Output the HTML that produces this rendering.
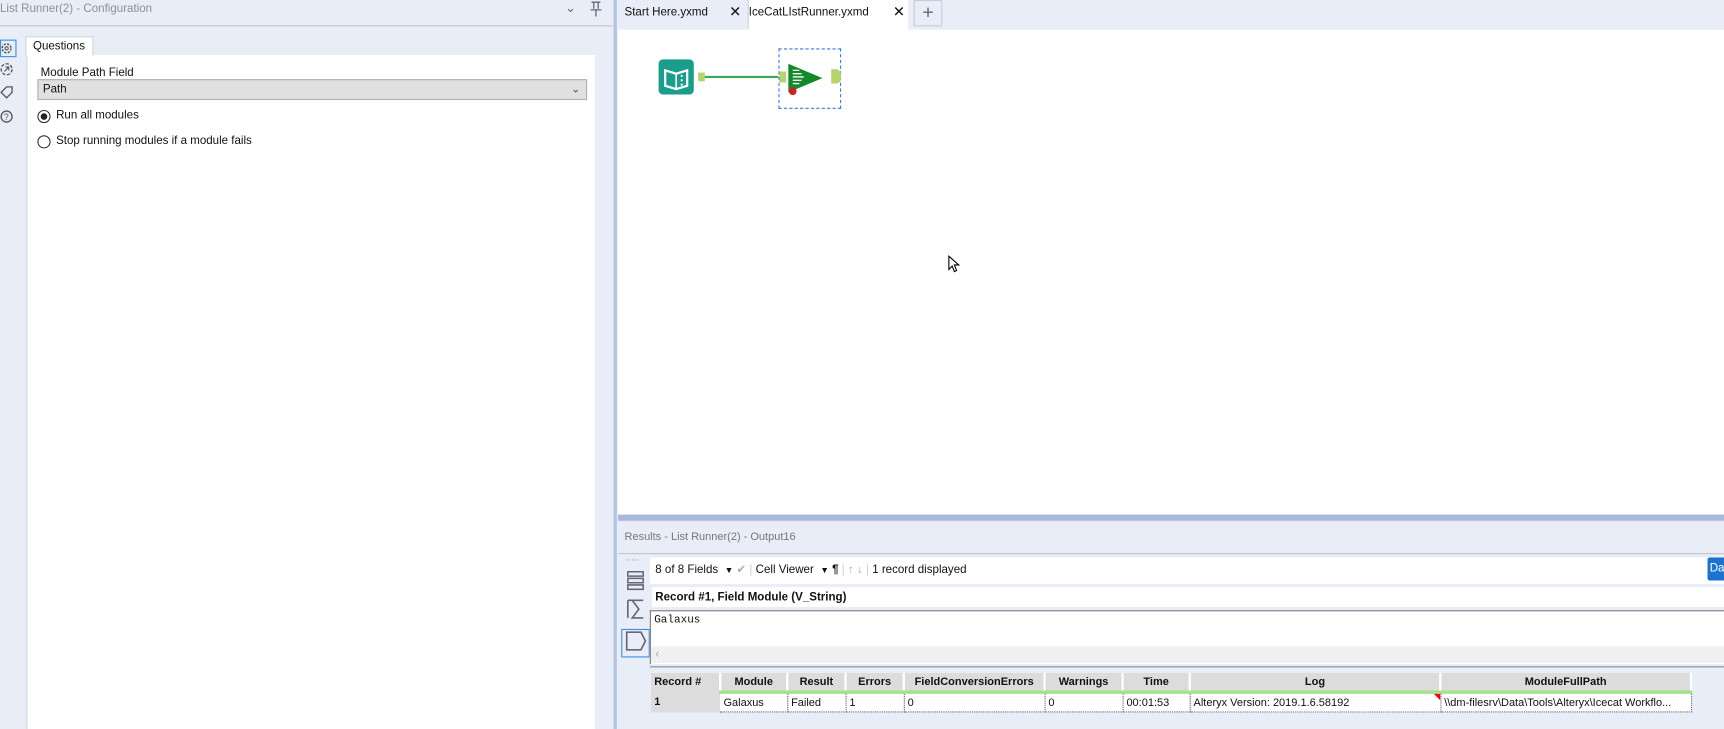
<!DOCTYPE html>
<html><head><meta charset="utf-8"><style>
html,body{margin:0;padding:0;width:1724px;height:729px;overflow:hidden;background:#e9edf7;font-family:"Liberation Sans",sans-serif;}
#w{position:absolute;left:0;top:0;width:1568px;height:663px;transform:scale(1.0995);transform-origin:0 0;font-size:10.5px;color:#111;}
.a{position:absolute;}
.t{white-space:nowrap;}
table{border-collapse:collapse;font-size:10px;table-layout:fixed;}
td{padding:0 3px;height:16px;white-space:nowrap;overflow:hidden;}
.h td{background:#dcdcdc;font-weight:bold;text-align:center;border-right:2px solid #fff;border-bottom:3px solid #a4e28a;}
.h td:first-child{text-align:left;border-bottom:none}
.r td{background:#fff;border-right:1px dotted #666;border-bottom:1px dotted #666;}
.r td:first-child{background:#dcdcdc;font-weight:bold;border:none}
</style></head><body><div id="w">
<div class="a t" style="left:0;top:2px;color:#8a8f99;font-size:10.5px">List Runner(2) - Configuration</div>
<div class="a t" style="left:514px;top:0;color:#667;font-size:12px">&#8964;</div>
<svg class="a" style="left:535px;top:1px" width="14" height="14" viewBox="0 0 14 14"><path d="M3 1h8M5 1v6M9 1v6M2 8h10M7 8v6" stroke="#667" fill="none" stroke-width="1.2"/></svg>
<div class="a" style="left:0;top:23px;width:557px;height:1px;background:#c0c4cc"></div>
<div class="a" style="left:0;top:36px;width:13px;height:14px;border:1px solid #3a8ee6"></div>
<svg class="a" style="left:0;top:36px" width="16" height="80"><circle cx="6" cy="8" r="4" fill="none" stroke="#555" stroke-width="1.3" stroke-dasharray="2 1.2"/><circle cx="6" cy="8" r="1.5" fill="none" stroke="#555"/><circle cx="6" cy="27" r="5" fill="none" stroke="#555" stroke-width="1.2" stroke-dasharray="3 1.5"/><path d="M4 29l4-4M5 25h3v3" stroke="#555" fill="none"/><path d="M1 48l5-5h5v5l-5 5z" fill="none" stroke="#555" stroke-width="1.2"/><circle cx="6" cy="70" r="5" fill="none" stroke="#555" stroke-width="1.2"/><text x="3.5" y="73" font-size="8" fill="#555" font-family="Liberation Sans">?</text></svg>
<div class="a" style="left:24px;top:50px;width:516px;height:613px;background:#fff;border-left:1px solid #d0d4dc"></div>
<div class="a t" style="left:23px;top:33px;width:54px;height:17px;background:#fff;border:1px solid #d0d4dc;border-bottom:none;padding-left:6px;line-height:17px">Questions</div>
<div class="a t" style="left:37px;top:60px">Module Path Field</div>
<div class="a t" style="left:34px;top:72px;width:494px;height:17px;background:#e0e0e0;border:1px solid #b0b0b0;padding-left:4px;line-height:17px">Path<span style="position:absolute;right:5px;color:#555">&#8964;</span></div>
<div class="a" style="left:34px;top:100px;width:10px;height:10px;border:1px solid #333;border-radius:50%;background:#fff"></div>
<div class="a" style="left:37px;top:103px;width:6px;height:6px;border-radius:50%;background:#222"></div>
<div class="a t" style="left:51px;top:99px">Run all modules</div>
<div class="a" style="left:34px;top:123px;width:10px;height:10px;border:1px solid #333;border-radius:50%;background:#fff"></div>
<div class="a t" style="left:51px;top:122px">Stop running modules if a module fails</div>
<div class="a" style="left:558px;top:0;width:3px;height:663px;background:#b4c3e0"></div>
<div class="a t" style="left:562px;top:0;width:112px;height:26px;border-right:1px solid #c8ccd8;line-height:22px;padding-left:6px">Start Here.yxmd<span style="position:absolute;right:6px;font-size:13px">✕</span></div>
<div class="a t" style="left:681px;top:0;width:145px;height:27px;background:#fff;line-height:22px"><span>IceCatLIstRunner.yxmd</span><span style="position:absolute;right:3px;font-size:13px">✕</span></div>
<div class="a t" style="left:831px;top:0;width:24px;height:22px;border:1px solid #c8ccd8;text-align:center;font-size:18px;line-height:20px;color:#667">+</div>
<div class="a" style="left:562px;top:27px;width:1006px;height:441px;background:#fff"></div>
<div class="a" style="left:599px;top:54px;width:32px;height:32px;background:#1a9e8c;border-radius:4px"></div>
<svg class="a" style="left:599px;top:54px" width="32" height="32"><path d="M6 10v14l10 3 10-3V10l-10 3z" fill="none" stroke="#fff" stroke-width="2"/><path d="M16 13v14" stroke="#fff" stroke-width="1.5"/><circle cx="21" cy="15" r="1" fill="#fff"/><circle cx="21" cy="19" r="1" fill="#fff"/><circle cx="21" cy="23" r="1" fill="#fff"/></svg>
<div class="a" style="left:635px;top:66px;width:6px;height:8px;background:#b6d46a"></div>
<div class="a" style="left:641px;top:69px;width:67px;height:2px;background:#3aa85a"></div>
<div class="a" style="left:708px;top:44px;width:55px;height:53px;border:1px dashed #3a7ed6"></div>
<div class="a" style="left:709px;top:65px;width:6px;height:10px;background:#b6d46a"></div>
<svg class="a" style="left:716px;top:56px" width="34" height="34"><path d="M1 2L32 15 1 28z" fill="#128a2a"/><path d="M5 8h6M5 11h8M5 14h10M5 17h8M5 20h6" stroke="#fff" stroke-width="1.2"/><circle cx="5" cy="27" r="3.5" fill="#c22"/></svg>
<div class="a" style="left:756px;top:63px;width:9px;height:13px;background:#b6d46a;border-radius:0 5px 5px 0"></div>
<svg class="a" style="left:862px;top:232px" width="12" height="16"><path d="M1 1v12l3-3 2 5 2-1-2-5h4z" fill="#fff" stroke="#000"/></svg>
<div class="a" style="left:562px;top:468px;width:1006px;height:5px;background:#a8b9dd"></div>
<div class="a" style="left:562px;top:473px;width:1006px;height:1px;background:#c0c4cc"></div>
<div class="a t" style="left:568px;top:483px;color:#777;font-size:10px">Results - List Runner(2) - Output16</div>
<div class="a" style="left:562px;top:503px;width:1006px;height:1px;background:#c0c4cc"></div>
<div class="a t" style="left:569px;top:502px;color:#999;font-size:9px">.....</div>
<svg class="a" style="left:566px;top:516px" width="24" height="84"><path d="M5 4h14v4H5zM5 10h14v4H5zM5 16h14v4H5z" fill="none" stroke="#667" stroke-width="1.4"/><path d="M5 30h14M9 30l6 8-6 8h10M5 30v16" fill="none" stroke="#667" stroke-width="1.5"/><path d="M4 59h13l4 8-4 8H4z" fill="none" stroke="#667" stroke-width="1.5"/></svg>
<div class="a" style="left:565px;top:572px;width:24px;height:24px;border:1px solid #3a8ee6"></div>
<div class="a" style="left:591px;top:507px;width:977px;height:24px;background:#fff"></div>
<div class="a t" style="left:596px;top:512px">8 of 8 Fields &nbsp;<span style="font-size:8px">▼</span> <span style="color:#aaa">✔</span> <span style="color:#ccc">|</span> Cell Viewer &nbsp;<span style="font-size:8px">▼</span> <b>¶</b> <span style="color:#ccc">| <span style="color:#aaa">↑ ↓</span> |</span> 1 record displayed</div>
<div class="a t" style="left:1553px;top:507px;width:20px;height:21px;background:#1a73d0;color:#fff;border-radius:2px;line-height:21px;padding-left:2px">Da</div>
<div class="a" style="left:593px;top:534px;width:975px;height:18px;background:#fff"></div>
<div class="a t" style="left:596px;top:537px;font-weight:bold">Record #1, Field Module (V_String)</div>
<div class="a" style="left:591px;top:555px;width:977px;height:48px;background:#fff;border-top:1px solid #777;border-left:1px solid #777"></div>
<div class="a t" style="left:595px;top:559px;font-family:'Liberation Mono',monospace;font-size:10px">Galaxus</div>
<div class="a" style="left:592px;top:588px;width:976px;height:15px;background:#f0f0f0;color:#aaa;font-size:11px;line-height:15px;padding-left:4px">‹</div>
<div class="a" style="left:591px;top:606px;width:977px;height:1px;background:#888"></div>
<table class="a" style="left:592px;top:612px;width:946px">
<colgroup><col style="width:63px"><col style="width:61px"><col style="width:53px"><col style="width:53px"><col style="width:128px"><col style="width:71px"><col style="width:61px"><col style="width:228px"><col style="width:228px"></colgroup>
<tr class="h"><td>Record #</td><td>Module</td><td>Result</td><td>Errors</td><td>FieldConversionErrors</td><td>Warnings</td><td>Time</td><td>Log</td><td>ModuleFullPath</td></tr>
<tr class="r"><td>1</td><td>Galaxus</td><td>Failed</td><td>1</td><td>0</td><td>0</td><td>00:01:53</td><td style="position:relative">Alteryx Version: 2019.1.6.58192<span style="position:absolute;right:0;top:0;width:0;height:0;border-left:6px solid transparent;border-top:6px solid red"></span></td><td>\\dm-filesrv\Data\Tools\Alteryx\Icecat Workflo...</td></tr>
</table>
</div></body></html>
